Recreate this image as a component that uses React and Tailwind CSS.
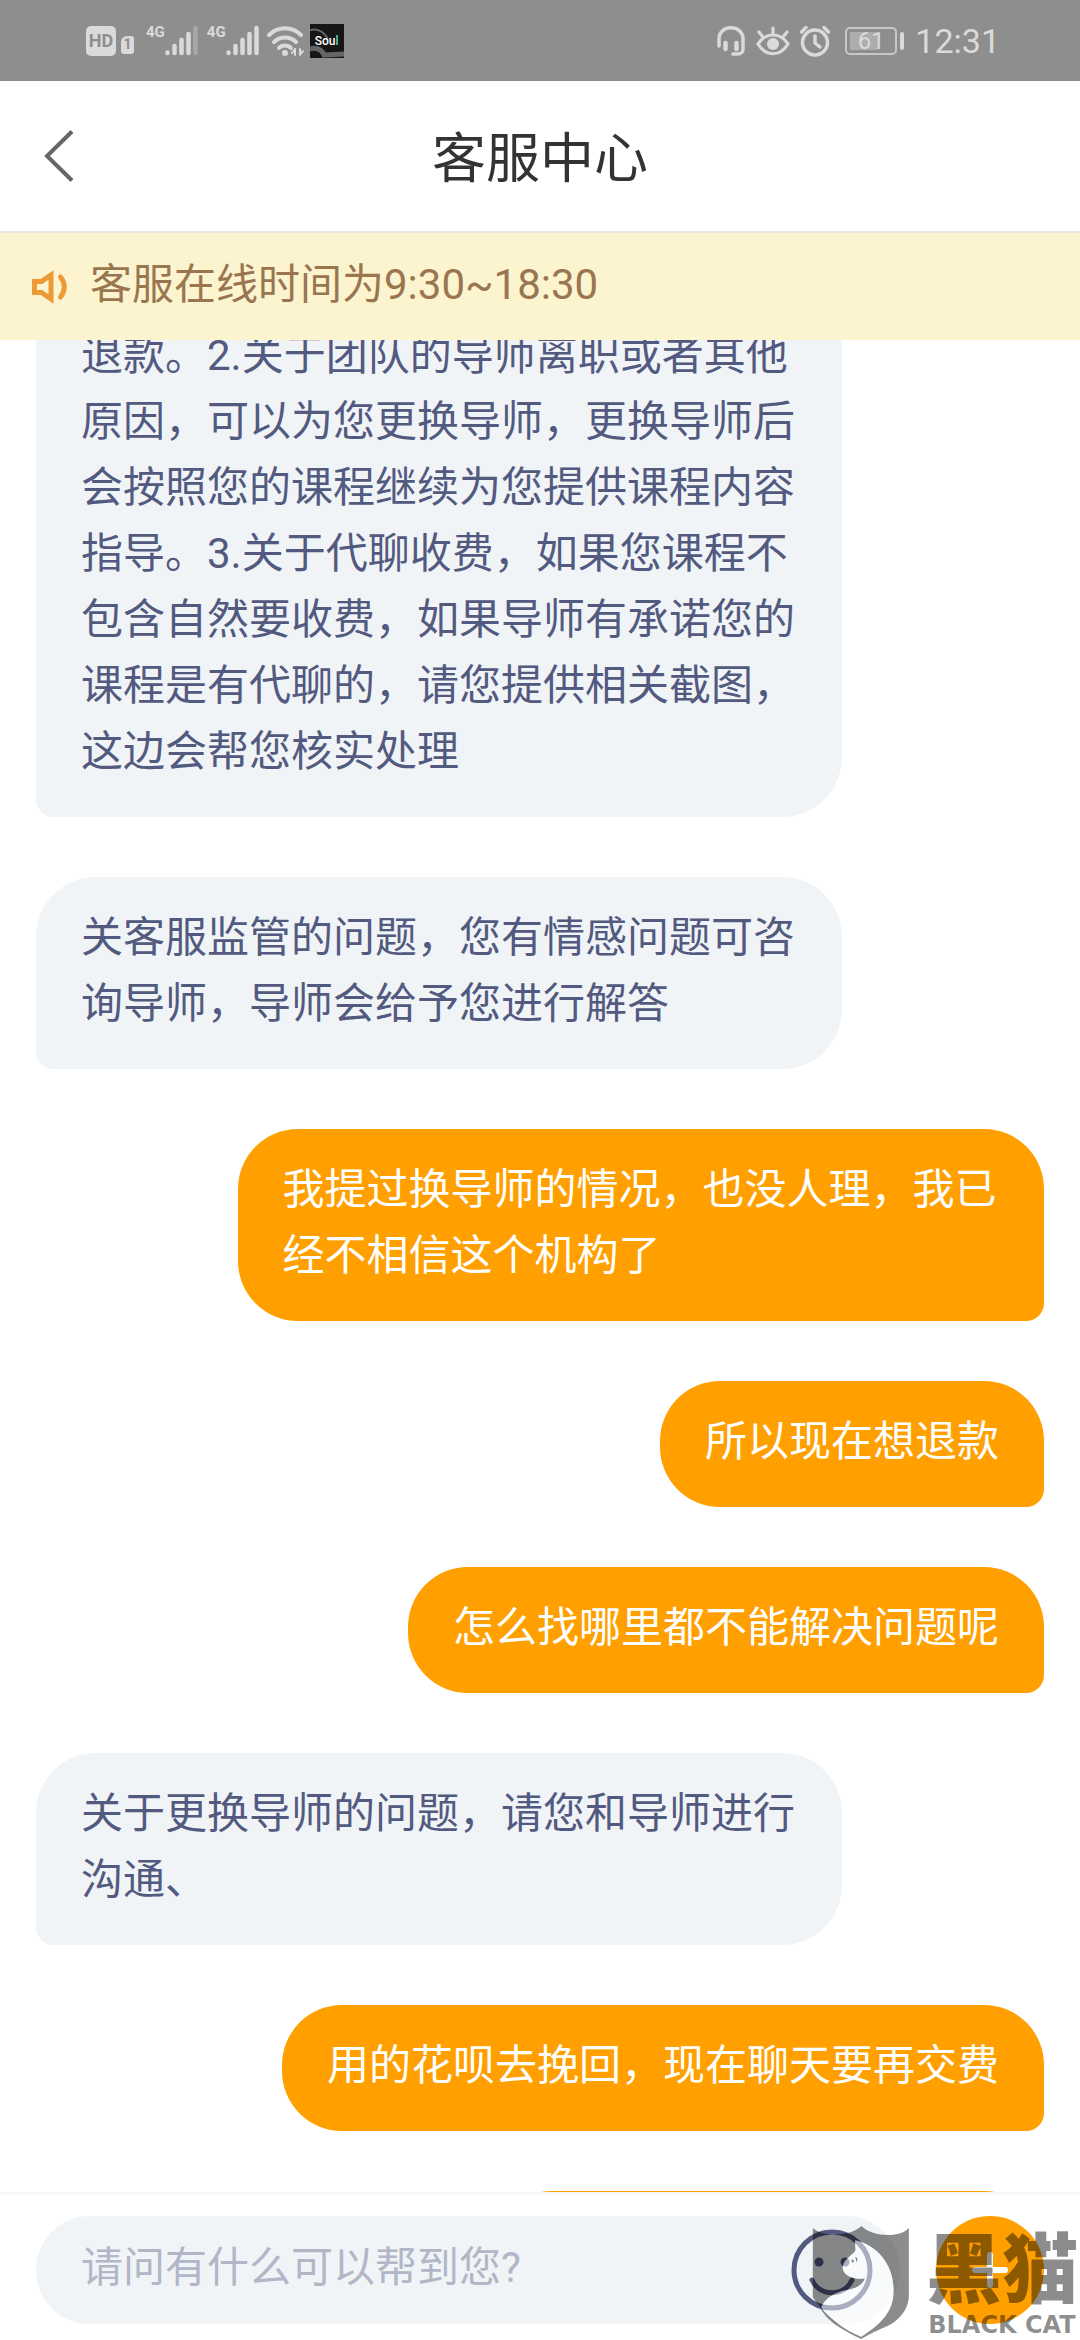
const messages = [
  {
    id: 1,
    from: "agent",
    cut: true,
    text: "退款。2.关于团队的导师离职或者其他原因，可以为您更换导师，更换导师后会按照您的课程继续为您提供课程内容指导。3.关于代聊收费，如果您课程不包含自然要收费，如果导师有承诺您的课程是有代聊的，请您提供相关截图，这边会帮您核实处理",
  },
  {
    id: 2,
    from: "agent",
    text: "关客服监管的问题，您有情感问题可咨询导师，导师会给予您进行解答",
  },
  { id: 3, from: "me", text: "我提过换导师的情况，也没人理，我已经不相信这个机构了" },
  { id: 4, from: "me", text: "所以现在想退款" },
  { id: 5, from: "me", text: "怎么找哪里都不能解决问题呢" },
  { id: 6, from: "agent", text: "关于更换导师的问题，请您和导师进行沟通、" },
  { id: 7, from: "me", text: "用的花呗去挽回，现在聊天要再交费" },
];

export default function App() {
  return (
    <div className="relative flex h-screen flex-col overflow-hidden bg-white font-['Roboto','Noto_Sans_CJK_SC',sans-serif]">
      <StatusBar />
      <Header title="客服中心" />
      <Notice text="客服在线时间为9:30~18:30" />
      <main className="flex min-h-0 flex-1 flex-col gap-[60px] overflow-hidden px-9">
        {messages.map((m) => (
          <Bubble key={m.id} message={m} />
        ))}
        {/* next message, still below the fold */}
        <div className="h-[126px] w-[552px] shrink-0 self-end rounded-[60px] rounded-br-[18px] bg-[#ffa000]" />
      </main>
      <Composer />
      <Watermark />
    </div>
  );
}

function Bubble({ message }) {
  const mine = message.from === "me";
  const look = mine
    ? "self-end rounded-[60px] rounded-br-[18px] bg-[#ffa000] text-white"
    : "self-start rounded-[60px] rounded-bl-[18px] bg-[#f0f4f7] text-[#535a80]";
  return (
    <p
      className={`max-w-4/5 shrink-0 px-[45px] pt-7 pb-8 text-[42px] leading-[66px] ${look} ${
        message.cut ? "-mt-[45px] rounded-t-none" : ""
      }`}
    >
      {message.text}
    </p>
  );
}

function Header({ title }) {
  return (
    <header className="grid h-[152px] shrink-0 grid-cols-3 items-center border-b-2 border-[#ebe8e8] px-9">
      <button type="button" aria-label="返回" className="justify-self-start p-2">
        <svg viewBox="0 0 30 52" className="h-[52px] w-[30px]" fill="none" stroke="#666" strokeWidth="4">
          <path d="M28 1.500L3 26l25 24.500" />
        </svg>
      </button>
      <h1 className="pt-2 text-center text-[54px] leading-[64px] whitespace-nowrap text-[#333]">{title}</h1>
    </header>
  );
}

function Notice({ text }) {
  return (
    <div className="flex h-[107px] shrink-0 items-center gap-[21px] bg-[#fcf3cf] px-[31px] text-[42px] leading-[60px] text-[#997650]">
      <svg viewBox="0 0 38 34" className="h-[34px] w-[38px]" fill="none" stroke="#eb9a35" strokeWidth="5">
        <path d="M3.500 11.500h7L20 5v24l-9.500-6.500h-7z" />
        <path d="M29.500 7c5 6 5 14 0 20" strokeLinecap="round" />
      </svg>
      <span className="pb-1">{text}</span>
    </div>
  );
}

function Composer() {
  return (
    <form className="flex shrink-0 items-center gap-9 border-t-[3px] border-[#f8f9fb] bg-white px-9 pt-[21px] pb-4">
      <div className="flex h-[108px] min-w-0 flex-1 items-center rounded-full bg-[#f0f4f7] pr-[27px] pl-[45px]">
        <input
          type="text"
          aria-label="消息"
          placeholder="请问有什么可以帮到您?"
          className="h-[72px] min-w-0 flex-1 bg-transparent pb-[6px] text-[42px] text-[#535a80] outline-none placeholder:text-[#b1b7c7]"
        />
        <button type="button" aria-label="表情">
          <svg viewBox="0 0 82 82" className="h-[82px] w-[82px]" fill="none" stroke="#535a80">
            <circle cx="41" cy="41" r="38" strokeWidth="5" />
            <path d="M21 51c8 17 32 17 40 0" strokeWidth="5" strokeLinecap="round" />
            <circle cx="28" cy="33" r="4.500" fill="#535a80" stroke="none" />
            <circle cx="54" cy="33" r="4.500" fill="#535a80" stroke="none" />
          </svg>
        </button>
      </div>
      <button
        type="button"
        aria-label="更多"
        className="flex size-[108px] items-center justify-center rounded-full bg-[#ffa000]"
      >
        <svg viewBox="0 0 36 36" className="size-9" stroke="#fff" strokeWidth="6" strokeLinecap="round">
          <path d="M18 3v30M3 18h30" />
        </svg>
      </button>
    </form>
  );
}

const SHIELD =
  "M94 52C115 78 205 82 240 47C275 82 360 82 383 52V255C383 300 350 335 310 352C285 362 262 375 240 387C205 370 165 350 140 325C125 310 118 298 114 288L94 262Z";
const CAT =
  "M222 90C290 105 337 165 337 240C337 305 300 340 240 380C190 360 145 325 119 292C130 265 160 245 195 240C225 236 245 222 251 204C235 207 218 206 205 200C190 192 183 180 184 170C186 150 205 140 222 122C224 112 219 100 222 90Z";

function Watermark() {
  return (
    <div className="pointer-events-none absolute right-0 bottom-0 flex items-end gap-4 pr-[2px]">
      <svg viewBox="92 44 294 346" className="h-[115px] w-[98px]">
        <path d={SHIELD + CAT} fillRule="evenodd" fill="#000" fillOpacity="0.45" />
        <path d={CAT} fill="#fff" fillOpacity="0.5" />
        <g fill="#777">
          <path d="M210 146l9 6-6 6z" />
          <path d="M221 141c9-1 9 10 3 16c2-6 1-10-3-16z" />
        </g>
      </svg>
      <div className="flex flex-col items-center text-black/45">
        <span className="mb-2 font-['Noto_Sans_CJK_TC',sans-serif] text-[76px] leading-[76px] font-black">黑猫</span>
        <span className="font-['DejaVu_Sans',sans-serif] text-[24px] leading-[30px] font-bold">BLACK CAT</span>
      </div>
    </div>
  );
}

function Signal({ weak }) {
  return (
    <span className="flex items-start">
      <span className="text-[15px] leading-[15px] font-bold">4G</span>
      <svg viewBox="0 0 33 31" className="h-[31px] w-[33px]" stroke="currentColor" strokeWidth="4.500" strokeLinecap="round">
        <path d="M2.500 27.500v.5M9.500 21v7M16.500 15v13M23.500 9v19" />
        <path d="M30.500 3v25" opacity={weak ? 0.35 : 1} />
      </svg>
    </span>
  );
}

function StatusBar() {
  return (
    <div className="flex h-[81px] shrink-0 items-center justify-between bg-[#8e8e8e] pr-20 pl-[86px] text-[#dadada]">
      <div className="flex items-center">
        <span className="flex size-[30px] items-center justify-center rounded-[5px] bg-[#dadada] text-[18px] font-bold text-[#8e8e8e]">
          HD
        </span>
        <span className="mt-2 ml-[5px] flex h-[18px] w-[13px] items-center justify-center rounded-[3px] rounded-tl-md bg-[#dadada] text-[14px] font-bold text-[#8e8e8e]">
          1
        </span>
        <span className="ml-3 flex gap-[9px]">
          <Signal weak />
          <Signal />
        </span>
        <svg viewBox="0 0 38 32" className="ml-[7px] h-8 w-[38px]" fill="none" stroke="currentColor" strokeWidth="4" strokeLinecap="round">
          <path d="M3 10c9-9 23-9 32 0M8 17c6-6 16-6 22 0M13 23c3-3.500 9-3.500 12 0" />
          <circle cx="19" cy="28" r="3" fill="currentColor" stroke="none" />
          <path d="M29 24v6M26 28l3-4M34 24v6M34 30l3-4" strokeWidth="2" />
        </svg>
        <span className="relative ml-[6px] flex size-[34px] items-center justify-center overflow-hidden bg-[#161616] text-[12px] font-medium text-white">
          <svg viewBox="0 0 34 34" className="absolute inset-0" fill="none" stroke="#666">
            <path d="M0 6c8-2 14 2 18 9" strokeWidth="2" />
            <path d="M0 25c7-2 12 0 15 8M15 31l19-1" strokeWidth="5" />
          </svg>
          <span className="relative">
            Sou<span className="text-[#5fd6cf]">l</span>
          </span>
        </span>
      </div>
      <div className="flex items-center">
        <svg viewBox="0 0 30 32" className="h-8 w-[30px]" fill="none" stroke="currentColor" strokeLinecap="round">
          <path d="M3 21v-7c0-15 24-15 24 0v10c0 3-2 5-5 5h-5" strokeWidth="3.500" />
          <path d="M9.500 18v6M20.500 18v6" strokeWidth="4.500" />
        </svg>
        <svg viewBox="0 0 36 32" className="ml-[9px] h-8 w-9" fill="none" stroke="currentColor" strokeWidth="3.200" strokeLinecap="round">
          <path d="M3 19c8-12 22-12 30 0c-8 13-22 13-30 0zM18 9V3M8 12L4 7M28 12l4-5" />
          <circle cx="18" cy="19" r="6" fill="currentColor" stroke="none" />
        </svg>
        <svg viewBox="0 0 32 32" className="ml-2 size-8" fill="none" stroke="currentColor" strokeWidth="3.500" strokeLinecap="round">
          <circle cx="16" cy="17.500" r="12.500" />
          <path d="M16 11v7l5 4M2.500 7L7 2.500M29.500 7L25 2.500" />
        </svg>
        <span className="ml-[14px] flex items-center gap-[3px]">
          <span className="relative flex h-7 w-[52px] items-center justify-center rounded-[5px] border-2 border-[#c8c8c8] text-[24px] leading-6">
            <span className="absolute inset-y-[3px] left-[3px] w-[28px] bg-[#adadad]" />
            <span className="relative">61</span>
          </span>
          <span className="h-[18px] w-1 rounded-sm bg-[#dadada]" />
        </span>
        <span className="ml-[11px] text-[34px] leading-10">12:31</span>
      </div>
    </div>
  );
}
